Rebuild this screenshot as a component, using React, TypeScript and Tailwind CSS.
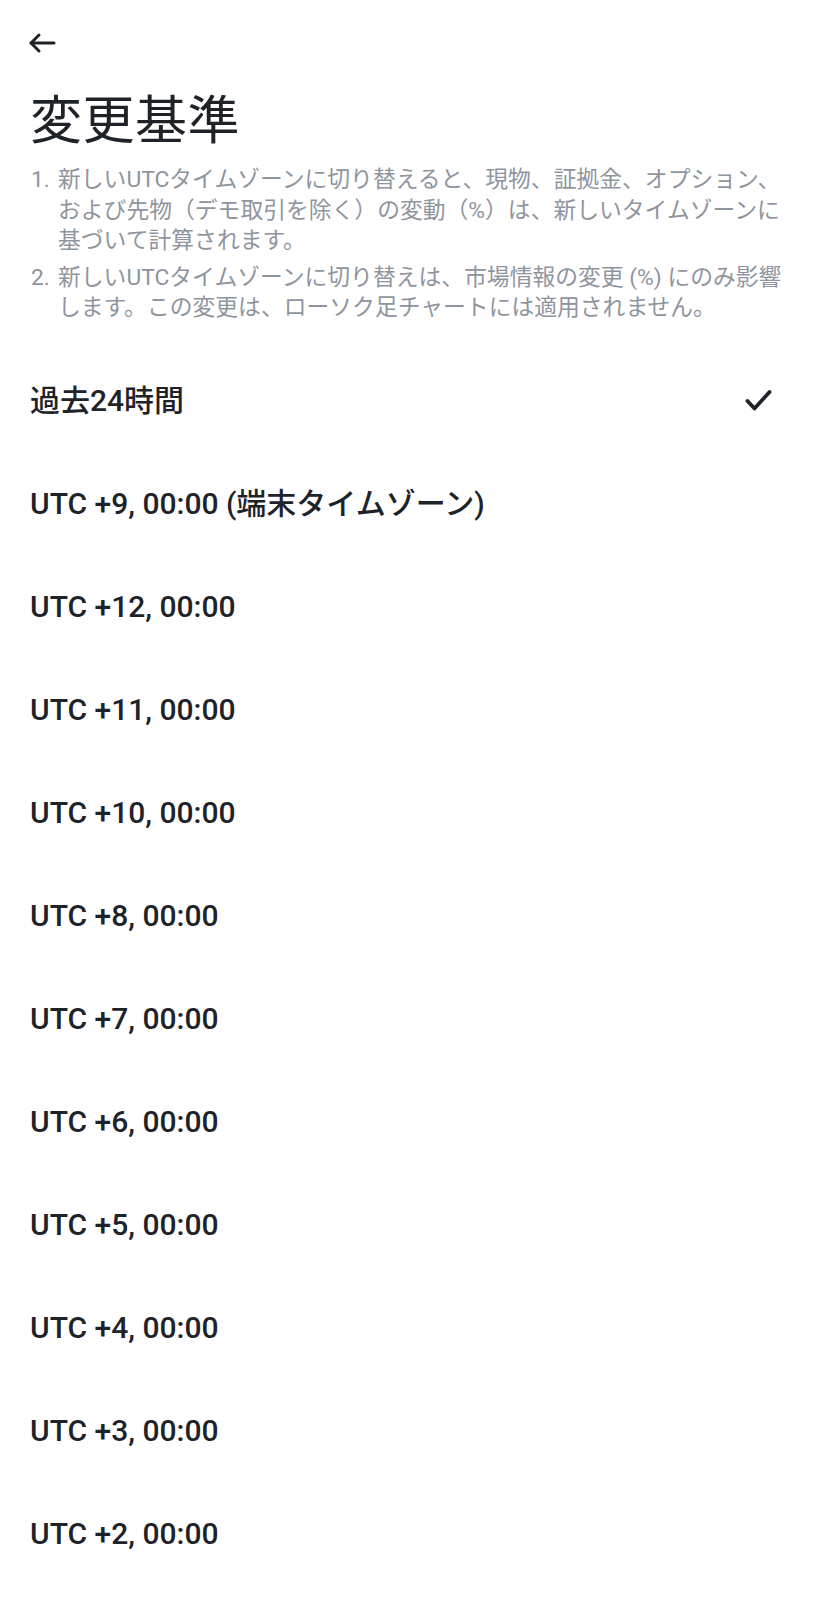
import React from 'react'

const options = [
  'UTC +9, 00:00 (端末タイムゾーン)',
  'UTC +12, 00:00',
  'UTC +11, 00:00',
  'UTC +10, 00:00',
  'UTC +8, 00:00',
  'UTC +7, 00:00',
  'UTC +6, 00:00',
  'UTC +5, 00:00',
  'UTC +4, 00:00',
  'UTC +3, 00:00',
  'UTC +2, 00:00',
]

export default function App() {
  return (
    <div className="min-h-screen bg-white text-[#1e2329] font-['Roboto','Noto_Sans_CJK_JP',sans-serif]">
      {/* Back */}
      <div className="px-[28px] pt-[32px] h-[56px]">
        <svg width="28" height="22" viewBox="0 0 28 22" fill="none" stroke="#1e2329" strokeWidth="3" strokeLinecap="round" strokeLinejoin="round">
          <path d="M26 11H3" />
          <path d="M11 3L3 11l8 8" />
        </svg>
      </div>

      {/* Title */}
      <h1 className="px-[30px] mt-[36px] text-[52px] leading-[60px] font-normal tracking-[0.5px]">変更基準</h1>

      {/* Notes */}
      <div className="pl-[31px] pr-[30px] mt-[13px] text-[22.8px] leading-[30.5px] text-[#8f959e] flex flex-col gap-[6px]">
        <div className="flex">
          <span className="w-[27px] shrink-0">1.</span>
          <p className="whitespace-nowrap">
            新しいUTCタイムゾーンに切り替えると、現物、証拠金、オプション、
            <br />
            および先物（デモ取引を除く）の変動（%）は、新しいタイムゾーンに
            <br />
            基づいて計算されます。
          </p>
        </div>
        <div className="flex">
          <span className="w-[27px] shrink-0">2.</span>
          <p className="whitespace-nowrap">
            新しいUTCタイムゾーンに切り替えは、市場情報の変更 (%) にのみ影響
            <br />
            します。この変更は、ローソク足チャートには適用されません。
          </p>
        </div>
      </div>

      {/* Options */}
      <div className="mt-[25px] px-[30px]">
        <div className="h-[103px] flex items-center justify-between">
          <span className="text-[30px] font-medium">過去24時間</span>
          <svg width="27" height="23" viewBox="0 0 27 23" fill="none" stroke="#1e2329" strokeWidth="3.8" strokeLinecap="round" strokeLinejoin="round" className="mr-[13px]">
            <path d="M2.5 12L9.5 19.5L24.5 3" />
          </svg>
        </div>
        {options.map((o) => (
          <div key={o} className="h-[103px] flex items-center">
            <span className="text-[30px] font-medium">{o}</span>
          </div>
        ))}
      </div>
    </div>
  )
}
